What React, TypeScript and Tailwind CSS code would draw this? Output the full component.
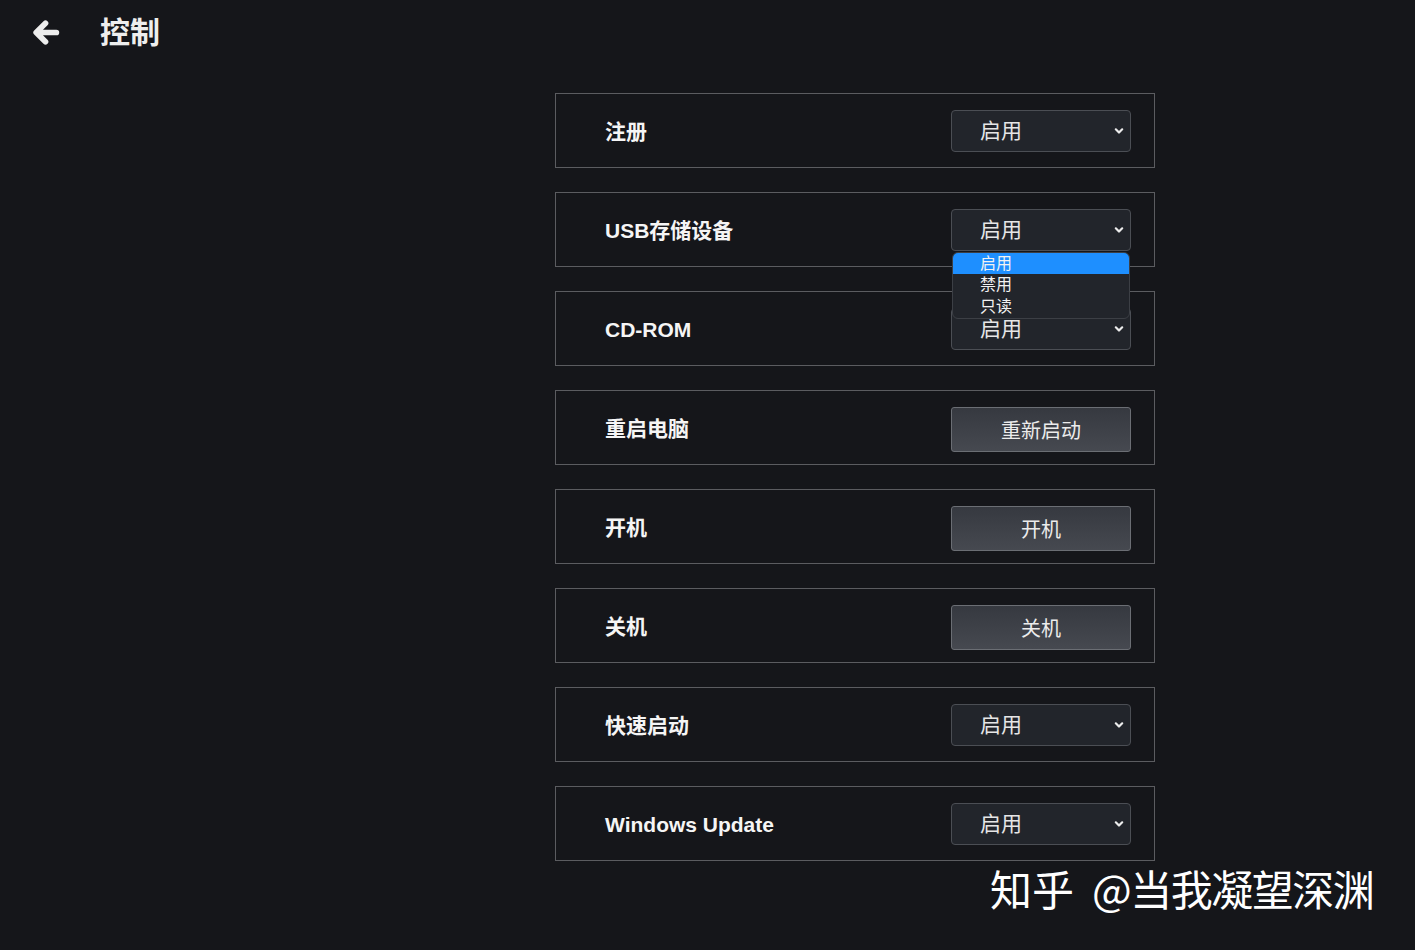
import React from "react";

const font = { fontFamily: '"Liberation Sans", Arial, "Noto Sans CJK SC", sans-serif' };

function Chevron() {
  return (
    <svg width="10" height="7" viewBox="0 0 10 7" className="absolute right-[6px] top-1/2 -translate-y-1/2">
      <path d="M1.8 1.8 L5 5 L8.2 1.8" fill="none" stroke="#ececec" strokeWidth="2.2" strokeLinecap="round" strokeLinejoin="round" />
    </svg>
  );
}

function BackArrow() {
  return (
    <svg width="29" height="29" viewBox="0 0 28 28">
      <path d="M24.5 14 H6 M14 5 L5 14 L14 23" fill="none" stroke="#ededed" strokeWidth="5.5" strokeLinecap="round" strokeLinejoin="round" />
    </svg>
  );
}

function Select({ value, open }: { value: string; open?: boolean }) {
  return (
    <div className="relative w-[180px]">
      <div className="relative h-[42px] rounded-[4px] border border-[#4b4e54] bg-[#22252b] pl-[28px] flex items-center text-[21px] text-[#e6e6e6]">
        {value}
        <Chevron />
      </div>
      {open && (
        <div className="absolute left-[1px] top-[43px] z-10 w-[178px] rounded-[6px] border border-[#3c3f45] bg-[#22252b] overflow-hidden text-[16px] leading-[22px] text-[#f2f2f2]">
          <div className="bg-[#1e8fff] pl-[27px] h-[21px] leading-[21px]">启用</div>
          <div className="pl-[27px] h-[22px]">禁用</div>
          <div className="pl-[27px] h-[22px]">只读</div>
        </div>
      )}
    </div>
  );
}

function Btn({ label }: { label: string }) {
  return (
    <div className="mt-[3px] h-[45px] w-[180px] rounded-[3px] border border-[#6b6e74] bg-gradient-to-b from-[#363940] to-[#464950] flex items-center justify-center pt-[4px] text-[20px] text-[#ececec]">
      {label}
    </div>
  );
}

type Row = { label: string; kind: "select" | "button"; value: string; open?: boolean };

const rows: Row[] = [
  { label: "注册", kind: "select", value: "启用" },
  { label: "USB存储设备", kind: "select", value: "启用", open: true },
  { label: "CD-ROM", kind: "select", value: "启用" },
  { label: "重启电脑", kind: "button", value: "重新启动" },
  { label: "开机", kind: "button", value: "开机" },
  { label: "关机", kind: "button", value: "关机" },
  { label: "快速启动", kind: "select", value: "启用" },
  { label: "Windows Update", kind: "select", value: "启用" },
];

export default function App() {
  return (
    <div className="relative w-[1415px] h-[950px] bg-[#15161a] text-white overflow-hidden" style={font}>
      <div className="flex items-center h-[64px] pl-[31px]">
        <BackArrow />
        <div className="ml-[40px] text-[30px] font-bold text-[#eeeeee]">控制</div>
      </div>
      <div className="ml-[555px] mt-[29px] w-[600px] flex flex-col gap-[24px]">
        {rows.map((r, i) => (
          <div
            key={i}
            className={`relative h-[75px] border border-[#5b5c60] flex items-center justify-between pl-[49px] pr-[23px] ${r.open ? "z-10" : ""}`}
          >
            <div className="pt-[2px] text-[21px] font-bold text-[#f5f5f5]">{r.label}</div>
            {r.kind === "select" ? <Select value={r.value} open={r.open} /> : <Btn label={r.value} />}
          </div>
        ))}
      </div>
      <div className="absolute left-[990px] top-[856px] flex text-[42px] text-white" style={{ fontFamily: '"Noto Sans CJK SC", sans-serif' }}>
        <span>知乎</span>
        <span className="ml-[18px] tracking-[-1.5px]">@当我凝望深渊</span>
      </div>
    </div>
  );
}
